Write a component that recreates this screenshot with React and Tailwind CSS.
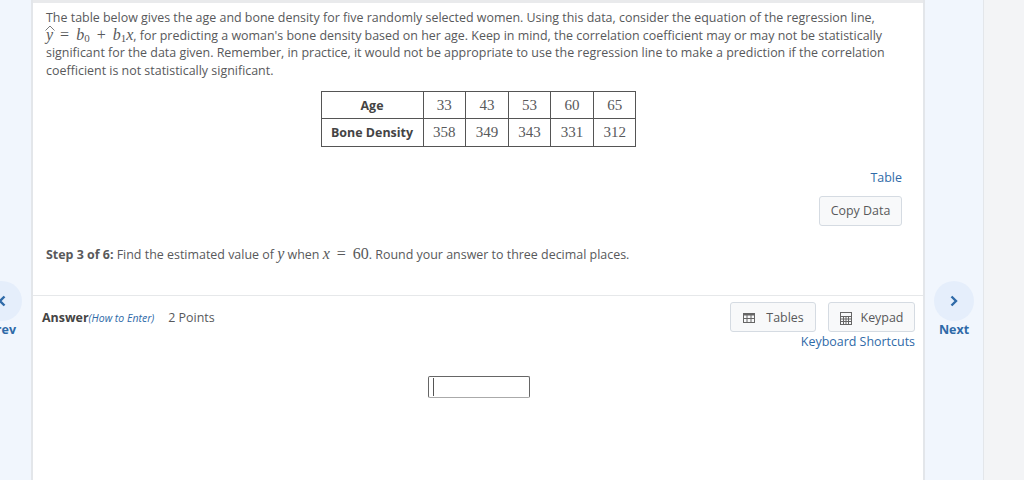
import React from "react";

const ages = [33, 43, 53, 60, 65];
const densities = [358, 349, 343, 331, 312];

function V({ children }) {
    return <span className="italic font-['Liberation_Serif',serif]">{children}</span>;
}

function Op({ children }) {
    return <span className="mx-[7px]">{children}</span>;
}

function TablesIcon() {
    return (
        <svg width="12" height="10" viewBox="0 0 12 10" fill="none" stroke="#666" strokeWidth="1">
            <rect x="0.5" y="0.5" width="11" height="9" />
            <rect x="0" y="0" width="12" height="2.5" fill="#666" stroke="none" />
            <path d="M0 5.5H12M4 2V10M8 2V10" />
        </svg>
    );
}

function KeypadIcon() {
    return (
        <svg width="12" height="13" viewBox="0 0 12 13" fill="none" stroke="#666" strokeWidth="1">
            <rect x="0.5" y="0.5" width="11" height="12" />
            <path d="M0.5 4.5H11.5M0.5 7H11.5M0.5 9.5H11.5M3.5 4.5V12.5M6 4.5V12.5M8.5 4.5V12.5" />
        </svg>
    );
}

export default function App() {
    return (
        <div className="flex h-[480px] w-[1024px] overflow-hidden bg-[#f3f4f6] font-['Open_Sans',sans-serif] text-[12.44px] text-[#58595b]">
            {/* prev rail, cut off by the window edge */}
            <div className="w-[31px] shrink-0 overflow-hidden bg-[#f1f6fd]">
                <div className="ml-[-19px] mt-[281px] flex w-[42px] flex-col items-center">
                    <div className="flex h-10 w-10 items-center justify-center rounded-full bg-[#e5eefb]">
                        <svg width="10" height="12" viewBox="0 0 10 12" fill="none" stroke="#2f6aa8" strokeWidth="2.4">
                            <path d="M7.5 1.5L3 6L7.5 10.5" />
                        </svg>
                    </div>
                    <div className="text-[12.5px] font-bold leading-[18px] text-[#2f6aa8]">Prev</div>
                </div>
            </div>

            <div className="h-full w-[894px] shrink-0 border-x-2 border-[#e3e6ea] bg-white">
                <div className="h-[3px] bg-[#e9eaec]" />
                <div className="px-[13px] pt-[6px] leading-[17.5px]">
                    <p>
                        The table below gives the age and bone density for five randomly selected women. Using this data, consider the equation of the regression line,
                        <br />
                        <span className="font-['Liberation_Serif',serif] text-[16px] leading-none">
                            <span className="relative">
                                <V>y</V>
                                <svg className="absolute left-[-1px] top-[-1px]" width="10" height="6" viewBox="0 0 10 6" fill="none" stroke="#58595b" strokeWidth="0.8">
                                    <path d="M0.5 5.5L5 1L9.5 5.5" />
                                </svg>
                            </span>
                            <Op>=</Op><V>b</V><sub className="text-[11px] leading-none">0</sub><Op>+</Op><V>b</V><sub className="text-[11px] leading-none">1</sub><V>x</V>
                        </span>
                        , for predicting a woman's bone density based on her age. Keep in mind, the correlation coefficient may or may not be statistically
                        <br />
                        significant for the data given. Remember, in practice, it would not be appropriate to use the regression line to make a prediction if the correlation
                        <br />
                        coefficient is not statistically significant.
                    </p>
                </div>

                <div className="mt-[12px] flex justify-center pl-[1px]">
                    <table className="border-collapse border border-[#555]">
                        <tbody>
                            <tr className="h-[27px]">
                                <td className="w-[102px] border border-[#555] pt-[2px] text-center font-bold text-[#444]">Age</td>
                                {ages.map((a) => (
                                    <td key={a} className="w-[42.6px] border border-[#555] text-center font-['Liberation_Serif',serif] text-[15px]">{a}</td>
                                ))}
                            </tr>
                            <tr className="h-[28px]">
                                <td className="border border-[#555] pt-[2px] text-center font-bold text-[#444]">Bone Density</td>
                                {densities.map((d) => (
                                    <td key={d} className="border border-[#555] text-center font-['Liberation_Serif',serif] text-[15px]">{d}</td>
                                ))}
                            </tr>
                        </tbody>
                    </table>
                </div>

                <div className="mt-[22px] flex flex-col items-end pr-[21px]">
                    <a className="leading-[18px] text-[#2f6aa8]">Table</a>
                    <button className="mt-[9px] h-[30px] w-[83px] rounded-[3px] border border-[#d5dbe2] bg-[#f8f9fa] pt-[1px] text-[#58595b]">Copy Data</button>
                </div>

                <p className="mt-[20px] h-[18px] px-[13px] leading-[18px]">
                    <b>Step 3 of 6:</b> Find the estimated value of <span className="font-['Liberation_Serif',serif] text-[16px] leading-none"><V>y</V></span> when <span className="font-['Liberation_Serif',serif] text-[16px] leading-none"><V>x</V><Op>=</Op>60</span>. Round your answer to three decimal places.
                </p>

                <div className="mt-[31px] border-t border-[#e6e8ea] pl-[9px] pr-[8px] pt-[6px]">
                    <div className="flex items-start justify-between">
                        <div className="flex items-baseline pt-[7px] leading-[18px]">
                            <b className="text-[#444]">Answer</b>
                            <a className="text-[10.5px] italic text-[#2f6aa8]">(How to Enter)</a>
                            <span className="ml-[14px]">2 Points</span>
                        </div>
                        <div className="flex flex-col items-end">
                            <div className="flex gap-[12px]">
                                <button className="flex h-[30px] w-[86px] items-center justify-center gap-[11px] rounded-[3px] border border-[#d5dbe2] bg-[#f8f9fa] pl-[1px] pt-[2px]">
                                    <TablesIcon />
                                    Tables
                                </button>
                                <button className="flex h-[30px] w-[87px] items-center justify-center gap-[9px] rounded-[3px] border border-[#d5dbe2] bg-[#f8f9fa] pt-[2px]">
                                    <KeypadIcon />
                                    Keypad
                                </button>
                            </div>
                            <a className="mt-[1px] leading-[18px] text-[#2f6aa8]">Keyboard Shortcuts</a>
                        </div>
                    </div>
                    <div className="mt-[25px] flex justify-center">
                        <div className="flex h-[22px] w-[102px] items-center rounded-[2px] border border-[#666] border-b-[#aaa] bg-white pl-[4px]">
                            <div className="h-[18px] w-px bg-[#555]" />
                        </div>
                    </div>
                </div>
            </div>

            {/* next rail */}
            <div className="w-[59px] shrink-0 border-r border-[#e3e6ea] bg-[#f1f6fd] pt-[281px]">
                <div className="flex flex-col items-center">
                    <div className="flex h-10 w-10 items-center justify-center rounded-full bg-[#e5eefb]">
                        <svg width="10" height="12" viewBox="0 0 10 12" fill="none" stroke="#2f6aa8" strokeWidth="2.4">
                            <path d="M2.5 1.5L7 6L2.5 10.5" />
                        </svg>
                    </div>
                    <div className="text-[12.5px] font-bold leading-[18px] text-[#2f6aa8]">Next</div>
                </div>
            </div>
        </div>
    );
}
